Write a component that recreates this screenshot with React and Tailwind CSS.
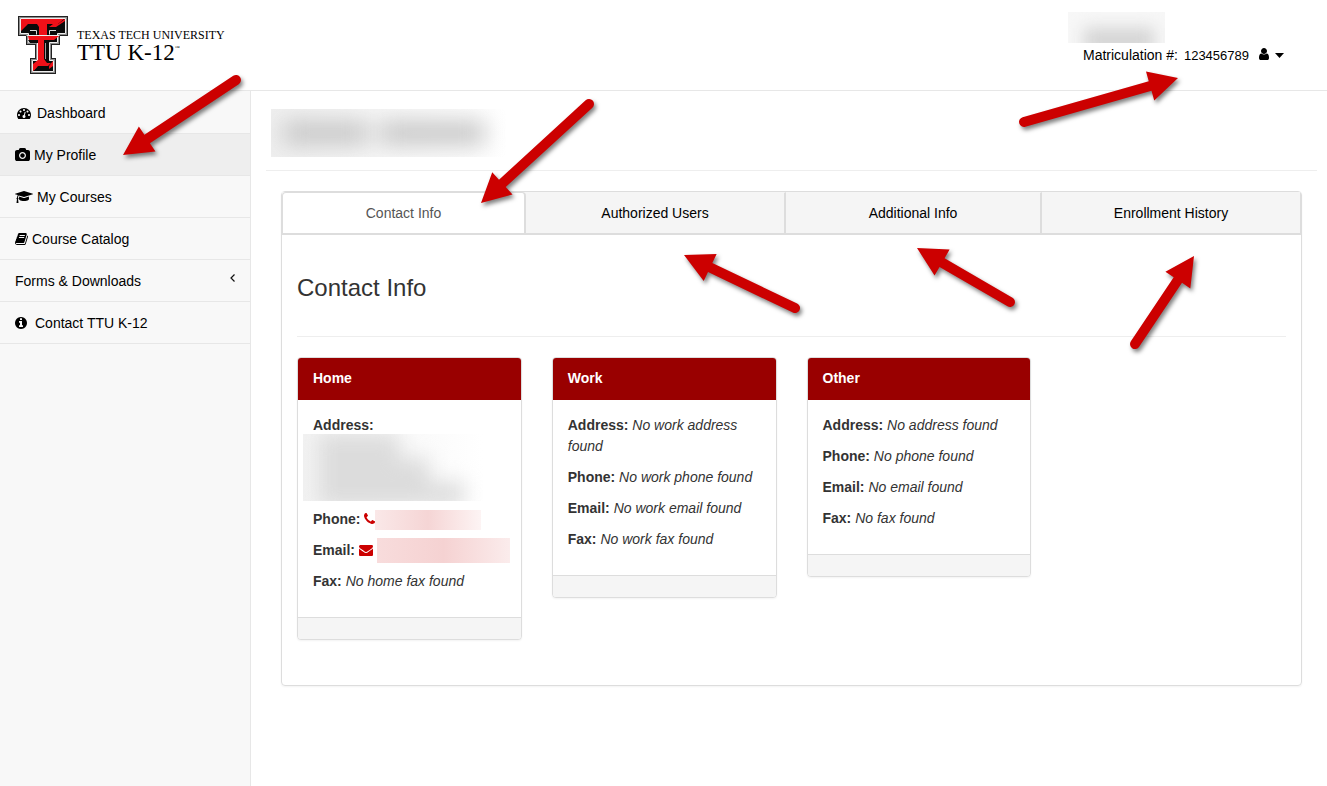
import React from 'react';

const ICONS = {
  dashboard: {
    box: '0 0 1792 1792',
    path: 'M384 1152q0-53-37.5-90.5t-90.5-37.5-90.5 37.5-37.5 90.5 37.5 90.5 90.5 37.5 90.5-37.5 37.5-90.5zm192-448q0-53-37.5-90.5t-90.5-37.5-90.5 37.5-37.5 90.5 37.5 90.5 90.5 37.5 90.5-37.5 37.5-90.5zm428 481l101-382q6-26-7.5-48.5t-38.5-29.5-48 6.5-30 39.5l-101 382q-60 5-107 43.5t-63 98.5q-20 77 20 146t117 89 146-20 89-117q16-60-6-117t-72-91zm660-33q0-53-37.5-90.5t-90.5-37.5-90.5 37.5-37.5 90.5 37.5 90.5 90.5 37.5 90.5-37.5 37.5-90.5zm-640-640q0-53-37.5-90.5t-90.5-37.5-90.5 37.5-37.5 90.5 37.5 90.5 90.5 37.5 90.5-37.5 37.5-90.5zm448 192q0-53-37.5-90.5t-90.5-37.5-90.5 37.5-37.5 90.5 37.5 90.5 90.5 37.5 90.5-37.5 37.5-90.5zm320 448q0 261-141 483-19 29-54 29h-1402q-35 0-54-29-141-221-141-483 0-182 71-348t191-286 286-191 348-71 348 71 286 191 191 286 71 348z',
  },
  camera: {
    box: '0 0 1920 1792',
    path: 'M960 672q119 0 203.5 84.5t84.5 203.5-84.5 203.5-203.5 84.5-203.5-84.5-84.5-203.5 84.5-203.5 203.5-84.5zm704-416q106 0 181 75t75 181v896q0 106-75 181t-181 75h-1408q-106 0-181-75t-75-181v-896q0-106 75-181t181-75h224l51-136q19-49 69.5-84.5t103.5-35.5h512q53 0 103.5 35.5t69.5 84.5l51 136h224zm-704 1152q185 0 316.5-131.5t131.5-316.5-131.5-316.5-316.5-131.5-316.5 131.5-131.5 316.5 131.5 316.5 316.5 131.5z',
  },
  cap: {
    box: '0 0 2304 1792',
    path: 'M1774 836l18 316q4 69-82 128t-235 93.5-323 34.5-323-34.5-235-93.5-82-128l18-316 574 181q22 7 48 7t48-7zm530-324q0 23-22 31l-1120 352q-4 1-10 1t-10-1l-652-206q-43 34-71 111.5t-34 178.5q63 36 63 109 0 69-58 107l58 433q2 14-8 25-9 11-24 11h-192q-15 0-24-11-10-11-8-25l58-433q-58-38-58-107 0-73 65-111 11-207 98-330l-333-104q-22-8-22-31t22-31l1120-352q4-1 10-1t10 1l1120 352q22 8 22 31z',
  },
  book: {
    box: '60 0 1664 1792',
    path: 'M1703 478q40 57 18 129l-275 906q-19 64-76.5 107.5t-122.5 43.5h-923q-77 0-148.5-53.5t-99.5-131.5q-24-67-2-127 0-4 3-27t4-37q1-8-3-21.5t-3-19.5q2-11 8-21t16.5-23.5 16.5-23.5q23-38 45-91.5t30-91.5q3-10 .5-30t-.5-28q3-11 17-28t17-23q21-36 42-92t25-90q1-9-2.5-32t.5-28q4-13 22-30.5t22-22.5q19-26 42.5-84.5t27.5-96.5q1-8-3-25.5t-2-26.5q2-8 9-18t18-23 17-21q8-12 16.5-30.5t15-35 16-36 19.5-32 26.5-23.5 36-11.5 47.5 5.5l-1 3q38-9 51-9h761q74 0 114 56t18 130l-274 906q-36 119-71.5 153.5t-128.5 34.5h-869q-27 0-38 15-11 16-1 43 24 70 144 70h923q29 0 56-15.5t35-41.5l300-987q7-22 5-57 38 15 59 43zm-1064 2q-4 13 2 22.5t20 9.5h608q13 0 25.5-9.5t16.5-22.5l21-64q4-13-2-22.5t-20-9.5h-608q-13 0-25.5 9.5t-16.5 22.5zm-83 256q-4 13 2 22.5t20 9.5h608q13 0 25.5-9.5t16.5-22.5l21-64q4-13-2-22.5t-20-9.5h-608q-13 0-25.5 9.5t-16.5 22.5z',
  },
  info: {
    box: '128 0 1536 1792',
    path: 'M1152 1376v-160q0-14-9-23t-23-9h-96v-512q0-14-9-23t-23-9h-320q-14 0-23 9t-9 23v160q0 14 9 23t23 9h96v320h-96q-14 0-23 9t-9 23v160q0 14 9 23t23 9h448q14 0 23-9t9-23zm-128-896v-160q0-14-9-23t-23-9h-192q-14 0-23 9t-9 23v160q0 14 9 23t23 9h192q14 0 23-9t9-23zm640 416q0 209-103 385.5t-279.5 279.5-385.5 103-385.5-103-279.5-279.5-103-385.5 103-385.5 279.5-279.5 385.5-103 385.5 103 279.5 279.5 103 385.5z',
  },
  user: {
    box: '256 0 1280 1792',
    path: 'M1536 1399q0 109-62.5 187t-150.5 78h-854q-88 0-150.5-78t-62.5-187q0-85 8.5-160.5t31.5-152 58.5-131 94-89 134.5-34.5q131 128 313 128t313-128q76 0 134.5 34.5t94 89 58.5 131 31.5 152 8.5 160.5zm-256-887q0 159-112.5 271.5t-271.5 112.5-271.5-112.5-112.5-271.5 112.5-271.5 271.5-112.5 271.5 112.5 112.5 271.5z',
  },
  phone: {
    box: '192 0 1408 1792',
    path: 'M1600 1240q0 27-10 70.5t-21 68.5q-21 50-122 106-94 51-186 51-27 0-53-3.5t-57.5-12.5-47-14.5-55.5-20.5-49-18q-98-35-175-83-127-79-264-216t-216-264q-48-77-83-175-3-9-18-49t-20.5-55.5-14.5-47-12.5-57.5-3.5-53q0-92 51-186 56-101 106-122 25-11 68.5-21t70.5-10q14 0 21 3 18 6 53 76 11 19 30 54t35 63.5 31 53.5q3 4 17.5 25t21.5 35.5 7 28.5q0 20-28.5 50t-62 55-62 53-28.5 46q0 9 5 22.5t8.5 20.5 14 24 11.5 19q76 137 174 235t235 174q2 1 19 11.5t24 14 20.5 8.5 22.5 5q18 0 46-28.5t53-62 55-62 50-28.5q14 0 28.5 7t35.5 21.5 25 17.5q25 15 53.5 31t63.5 35 54 30q70 35 76 53 3 7 3 21z',
  },
  envelope: {
    box: '0 0 1792 1792',
    path: 'M1792 710v794q0 66-47 113t-113 47h-1472q-66 0-113-47t-47-113v-794q44 49 101 87 362 246 497 345 57 42 92.5 65.5t94.5 48 110 24.5h2q51 0 110-24.5t94.5-48 92.5-65.5q170-123 498-345 57-39 100-87zm0-294q0 79-49 151t-122 123q-376 261-468 325-10 7-42.5 31t-54 38.5-52 32.5-57.5 27-50 9h-2q-23 0-50-9t-57.5-27-52-32.5-54-38.5-42.5-31q-91-64-262-182.5t-205-142.5q-62-42-117-115.5t-55-136.5q0-78 41.5-130t118.5-52h1472q65 0 112.5 47t47.5 113z',
  },
};

const Icon = ({ name, className = '' }) => (
  <svg viewBox={ICONS[name].box} className={`mb-0.5 h-[14px] w-auto shrink-0 fill-current ${className}`} aria-hidden="true">
    <path d={ICONS[name].path} />
  </svg>
);

const menuItems = [
  { label: 'Dashboard', icon: 'dashboard', gap: 'ml-1.5', indent: 'ml-0.5' },
  { label: 'My Profile', icon: 'camera', gap: 'ml-1', active: true },
  { label: 'My Courses', icon: 'cap', gap: 'ml-1' },
  { label: 'Course Catalog', icon: 'book', gap: 'ml-1' },
  { label: 'Forms & Downloads', submenu: true },
  { label: 'Contact TTU K-12', icon: 'info', gap: 'ml-2' },
];

const tabs = ['Contact Info', 'Authorized Users', 'Additional Info', 'Enrollment History'];

const cards = [
  {
    title: 'Work',
    rows: [
      ['Address:', 'No work address found'],
      ['Phone:', 'No work phone found'],
      ['Email:', 'No work email found'],
      ['Fax:', 'No work fax found'],
    ],
  },
  {
    title: 'Other',
    rows: [
      ['Address:', 'No address found'],
      ['Phone:', 'No phone found'],
      ['Email:', 'No email found'],
      ['Fax:', 'No fax found'],
    ],
  },
];

// [tail x, tail y, tip x, tip y]
const arrows = [
  [236, 80, 123, 155],
  [589, 104, 481, 203],
  [1024, 122, 1178, 78],
  [795, 308, 684, 255],
  [1010, 302, 917, 248],
  [1135, 344, 1194, 256],
];

const Arrow = ({ points: [x1, y1, x2, y2] }) => {
  const length = Math.hypot(x2 - x1, y2 - y1);
  const angle = (Math.atan2(y2 - y1, x2 - x1) * 180) / Math.PI;
  const neck = length - 29;
  return (
    <path
      transform={`translate(${x1} ${y1}) rotate(${angle})`}
      d={`M0 -5H${neck}V-15L${length} 0L${neck} 15V5H0A5 5 0 0 1 0 -5Z`}
    />
  );
};

const Logo = () => (
  <svg viewBox="0 0 50 58" className="h-[58px] w-[50px] shrink-0" aria-hidden="true">
    {/* Outer T: dark edge, grey band, light line */}
    <path d="M0 0H50V20H42V29H34V42H38V58H12V42H17V29H8V20H0Z" fill="#222" />
    <path d="M1 1H49V19H41V28H33V43H37V57H13V43H18V28H9V19H1Z" fill="#8c8c8c" />
    <path d="M2.500 2.500H47.500V17.500H39.500V26.500H31.500V44.500H35.500V55.500H14.500V44.500H19.500V26.500H10.500V17.500H2.500Z" fill="#0a0a0a" stroke="#eee" />
    {/* Top bar facets */}
    <path d="M3 3H46L40 8H29V21H21V11L19 8H10L3 15Z" fill="#f01018" />
    <path d="M47 3V5L38 11H31L35 8H40Z" fill="#f01018" />
    <path d="M12 14.500H18.500V18.500M31.500 18.500V14.500H38" fill="none" stroke="#ddd" />
    {/* Crossbar */}
    <path d="M8.500 19.500H41.500" stroke="#eee" />
    <path d="M10 20H41L36 24H11Z" fill="#f01018" />
    <path d="M10 24H20V27H12Z" fill="#0a0a0a" />
    {/* Stem and foot */}
    <path d="M20 22H26V43L29 47H35L31 51H21L15 55V48L20 44Z" fill="#f01018" />
    <path d="M20 50H30L34 46H35V55H16Z" fill="#0a0a0a" />
    <path d="M27.500 27V43" stroke="#999" />
    <path d="M35 45V50L31 53V50Z" fill="#f01018" />
  </svg>
);

const Card = ({ title, children }) => (
  <section className="overflow-hidden rounded border border-[#ddd] bg-white shadow-xs">
    <h3 className="h-[42px] bg-[#900] px-[15px] py-2.5 font-bold text-white">{title}</h3>
    <div className="space-y-2.5 px-[15px] pt-[15px] pb-[25px]">{children}</div>
    <div className="h-[22px] border-t border-[#ddd] bg-[#f5f5f5]" />
  </section>
);

const App = () => {
  return (
    <div className="relative flex min-h-screen flex-col bg-white font-['Liberation_Sans',Arial,sans-serif] text-[14px] leading-[21px] text-[#333]">
      <header className="flex h-[91px] shrink-0 justify-between border-b border-[#e7e7e7]">
        <a href="#" className="flex gap-[9px] pt-4 pl-[18px] font-['Liberation_Serif',serif] text-black">
          <Logo />
          <span className="pt-3">
            <span className="block text-[12px] leading-[14px]">TEXAS TECH UNIVERSITY</span>
            <span className="block text-[23px] leading-[22px]">
              TTU K-12<sup className="align-super text-[5px]">™</sup>
            </span>
          </span>
        </a>
        <div className="flex flex-col pt-3 pr-[43px] text-black">
          <div className="-ml-[15px] h-[31px] w-[97px] overflow-hidden bg-[#f7f7f7]">
            <div className="mt-4 ml-4 h-6 w-[70px] bg-[#d4d4d4] blur-[8px]" />
          </div>
          <button type="button" className="flex h-6 items-center">
            Matriculation #:
            <span className="ml-1.5 text-[13px]">123456789</span>
            <Icon name="user" className="ml-2.5" />
            <svg viewBox="0 0 9 5" className="ml-1.5 h-[5px] w-[9px]" aria-hidden="true">
              <path d="M0 0H9L4.500 5Z" />
            </svg>
          </button>
        </div>
      </header>

      <div className="flex grow">
        <nav className="w-[251px] shrink-0 border-r border-[#e7e7e7] bg-[#f8f8f8] pt-px">
          <ul>
            {menuItems.map((item) => (
              <li key={item.label} className="border-b border-[#e7e7e7]">
                <a
                  href="#"
                  className={`flex h-[41px] items-center px-[15px] pt-0.5 text-black ${item.active ? 'bg-[#eee]' : ''}`}
                >
                  {item.icon && <Icon name={item.icon} className={item.indent} />}
                  <span className={item.gap}>{item.label}</span>
                  {item.submenu && (
                    <svg viewBox="0 0 5 8" className="mb-2 ml-auto h-2 w-[5px]" fill="none" stroke="#111" aria-hidden="true">
                      <path d="M4.500 0.500L1 4L4.500 7.500" strokeWidth="1.200" />
                    </svg>
                  )}
                </a>
              </li>
            ))}
          </ul>
        </nav>

        <main className="min-w-0 grow px-[15px] pt-[18px] pr-2.5">
          {/* Student name */}
          <div className="border-b border-[#eee] pb-[13px] pl-[5px]">
            <div className="h-12 w-[235px] overflow-hidden bg-linear-to-r from-[#efefef] to-white">
              <div className="mt-3 ml-3 flex gap-3 blur-[11px]">
                <div className="h-6 w-[85px] bg-[#c8c8c8]" />
                <div className="h-6 w-[105px] bg-[#c8c8c8]" />
              </div>
            </div>
          </div>

          <div className="mt-5 mr-[15px] ml-[15px] rounded border border-[#ddd] shadow-xs">
            <div role="tablist" className="grid grid-cols-[244fr_260fr_256fr_259fr] border-b-2 border-[#ddd] bg-[#f5f5f5]">
              {tabs.map((tab, i) => (
                <button
                  key={tab}
                  type="button"
                  role="tab"
                  aria-selected={i === 0}
                  className={`h-[41px] border-t border-r-2 last:border-r ${
                    i === 0 ? 'rounded-t border-l border-[#ddd] bg-white text-[#555]' : 'border-t-transparent border-r-[#ddd] text-black'
                  }`}
                >
                  {tab}
                </button>
              ))}
            </div>

            <div className="px-[15px] pt-10 pb-[45px]">
              <h2 className="text-[24px] leading-[26px]">Contact Info</h2>
              <hr className="mt-[35px] mb-5 border-[#eee]" />
              <div className="grid grid-cols-4 items-start gap-[30px]">
                <Card title="Home">
                  <div>
                    <b>Address:</b>
                    <div className="-mt-0.5 -mb-0.5 -ml-2.5 h-[67px] w-[180px] overflow-hidden bg-linear-to-r from-[#f2f2f2] to-white">
                      <div className="ml-4 blur-[10px]">
                        <div className="h-6 w-[80px] bg-[#dcdcdc]" />
                        <div className="h-6 w-[110px] bg-[#dcdcdc]" />
                        <div className="h-6 w-[145px] bg-[#dcdcdc]" />
                      </div>
                    </div>
                  </div>
                  <p className="flex items-center">
                    <b>Phone:</b>
                    <Icon name="phone" className="ml-1 text-[#c00]" />
                    <span className="h-5 w-[106px] bg-linear-to-r from-[#fae8e8] via-[#f5d5d5] to-[#fdf4f4]" />
                  </p>
                  <p className="flex h-[21px] items-center">
                    <b>Email:</b>
                    <Icon name="envelope" className="ml-1 text-[#c00]" />
                    <span className="-mr-1 ml-1 h-[25px] w-[135px] bg-linear-to-r from-[#f8dcdc] via-[#f5d2d2] to-[#fbecec]" />
                  </p>
                  <p>
                    <b>Fax:</b> <i>No home fax found</i>
                  </p>
                </Card>
                {cards.map((card) => (
                  <Card key={card.title} title={card.title}>
                    {card.rows.map(([label, value]) => (
                      <p key={label}>
                        <b>{label}</b> <i>{value}</i>
                      </p>
                    ))}
                  </Card>
                ))}
              </div>
            </div>
          </div>
        </main>
      </div>

      {/* Callout arrows over the page */}
      <svg className="pointer-events-none absolute inset-0 h-full w-full fill-[#c00] drop-shadow-[2px_3px_2px_rgba(0,0,0,0.5)]" aria-hidden="true">
        {arrows.map((points) => (
          <Arrow key={points.join()} points={points} />
        ))}
      </svg>
    </div>
  );
};

export default App;
